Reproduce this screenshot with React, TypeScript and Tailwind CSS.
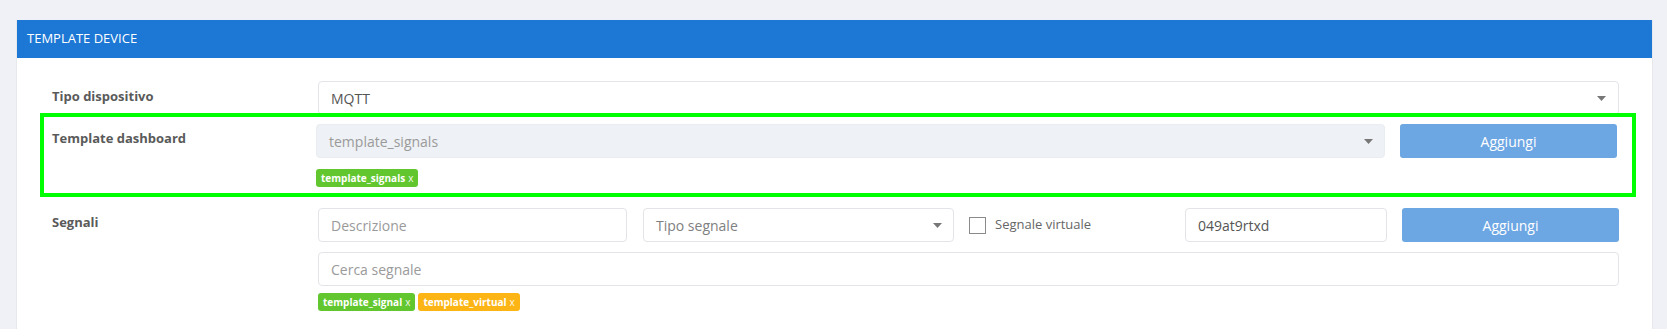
import React from 'react'

function Caret() {
  return (
    <svg width="9" height="5" viewBox="0 0 9 5" className="shrink-0">
      <path d="M0 0 L9 0 L4.5 5 Z" fill="#777" />
    </svg>
  )
}

function Tag({ label, color }: { label: string; color: string }) {
  return (
    <span
      className={`inline-flex h-[18px] items-center rounded-[3px] px-[5px] text-[10px] font-bold leading-none text-white ${color}`}
    >
      {label}
      <span className="ml-[3px] font-normal opacity-90">x</span>
    </span>
  )
}

export default function App() {
  return (
    <div className="min-h-screen bg-[#eff1f6] pt-[20px] font-['Open_Sans',sans-serif]">
      <div className="ml-[16px] w-[1637px] border-x border-[#e6e8ec] bg-white pb-[20px]">
        <div className="flex h-[38px] items-center bg-[#1d77d4] px-[10px] text-[13px] uppercase text-white">
          Template device
        </div>

        <div className="pl-[23px] pr-[16px] pt-[23px]">
          {/* tipo dispositivo */}
          <div className="flex">
            <div className="flex h-[32px] w-[278px] items-center pl-[12px] text-[13px] font-bold text-[#5a5a5a]">
              Tipo dispositivo
            </div>
            <div className="flex h-[34px] w-[1301px] items-center justify-between rounded-[4px] border border-[#e2e4e8] pl-[12px] pr-[12px] text-[14px] text-[#555]">
              <span>MQTT</span>
              <Caret />
            </div>
          </div>

          {/* template dashboard */}
          <div className="relative -mt-[2px] flex border-4 border-[#00ff00] bg-white pb-[6px] pl-[8px] pr-[15px] pt-[7px]">
            <div className="flex h-[30px] w-[270px] items-center text-[13px] font-bold text-[#5a5a5a]">
              Template dashboard
            </div>
            <div className="w-[1301px]">
              <div className="flex">
                <div className="flex h-[34px] w-[1069px] items-center justify-between rounded-[4px] border border-[#e9ecf0] bg-[#eef1f5] pl-[12px] pr-[11px] text-[14px] text-[#9a9a9a]">
                  <span>template_signals</span>
                  <Caret />
                </div>
                <button className="ml-[15px] h-[34px] w-[217px] rounded-[3px] bg-[#6ca6e3] text-[14px] text-white">
                  Aggiungi
                </button>
              </div>
              <div className="mt-[11px] flex">
                <Tag label="template_signals" color="bg-[#62c72e]" />
              </div>
            </div>
          </div>

          {/* segnali */}
          <div className="flex pt-[11px]">
            <div className="flex h-[30px] w-[278px] items-center pl-[12px] text-[13px] font-bold text-[#5a5a5a]">
              Segnali
            </div>
            <div className="w-[1301px]">
              <div className="flex items-center">
                <div className="flex h-[34px] w-[309px] items-center rounded-[4px] border border-[#e2e4e8] pl-[12px] text-[14px] text-[#9a9a9a]">
                  Descrizione
                </div>
                <div className="ml-[16px] flex h-[34px] w-[311px] items-center justify-between rounded-[4px] border border-[#e2e4e8] pl-[12px] pr-[11px] text-[14px] text-[#808080]">
                  <span>Tipo segnale</span>
                  <Caret />
                </div>
                <div className="ml-[15px] flex w-[216px] items-center">
                  <span className="h-[17px] w-[17px] border border-[#8a8a8a] bg-white" />
                  <span className="ml-[9px] text-[13px] text-[#666]">Segnale virtuale</span>
                </div>
                <div className="flex h-[34px] w-[202px] items-center rounded-[4px] border border-[#e2e4e8] pl-[12px] text-[14px] text-[#555]">
                  049at9rtxd
                </div>
                <button className="ml-[15px] h-[34px] w-[217px] rounded-[3px] bg-[#6ca6e3] text-[14px] text-white">
                  Aggiungi
                </button>
              </div>
              <div className="mt-[10px] flex h-[34px] items-center rounded-[4px] border border-[#e2e4e8] pl-[12px] text-[14px] text-[#9a9a9a]">
                Cerca segnale
              </div>
              <div className="mt-[7px] flex gap-[3px]">
                <Tag label="template_signal" color="bg-[#62c72e]" />
                <Tag label="template_virtual" color="bg-[#fdb515]" />
              </div>
            </div>
          </div>
        </div>
      </div>
    </div>
  )
}
